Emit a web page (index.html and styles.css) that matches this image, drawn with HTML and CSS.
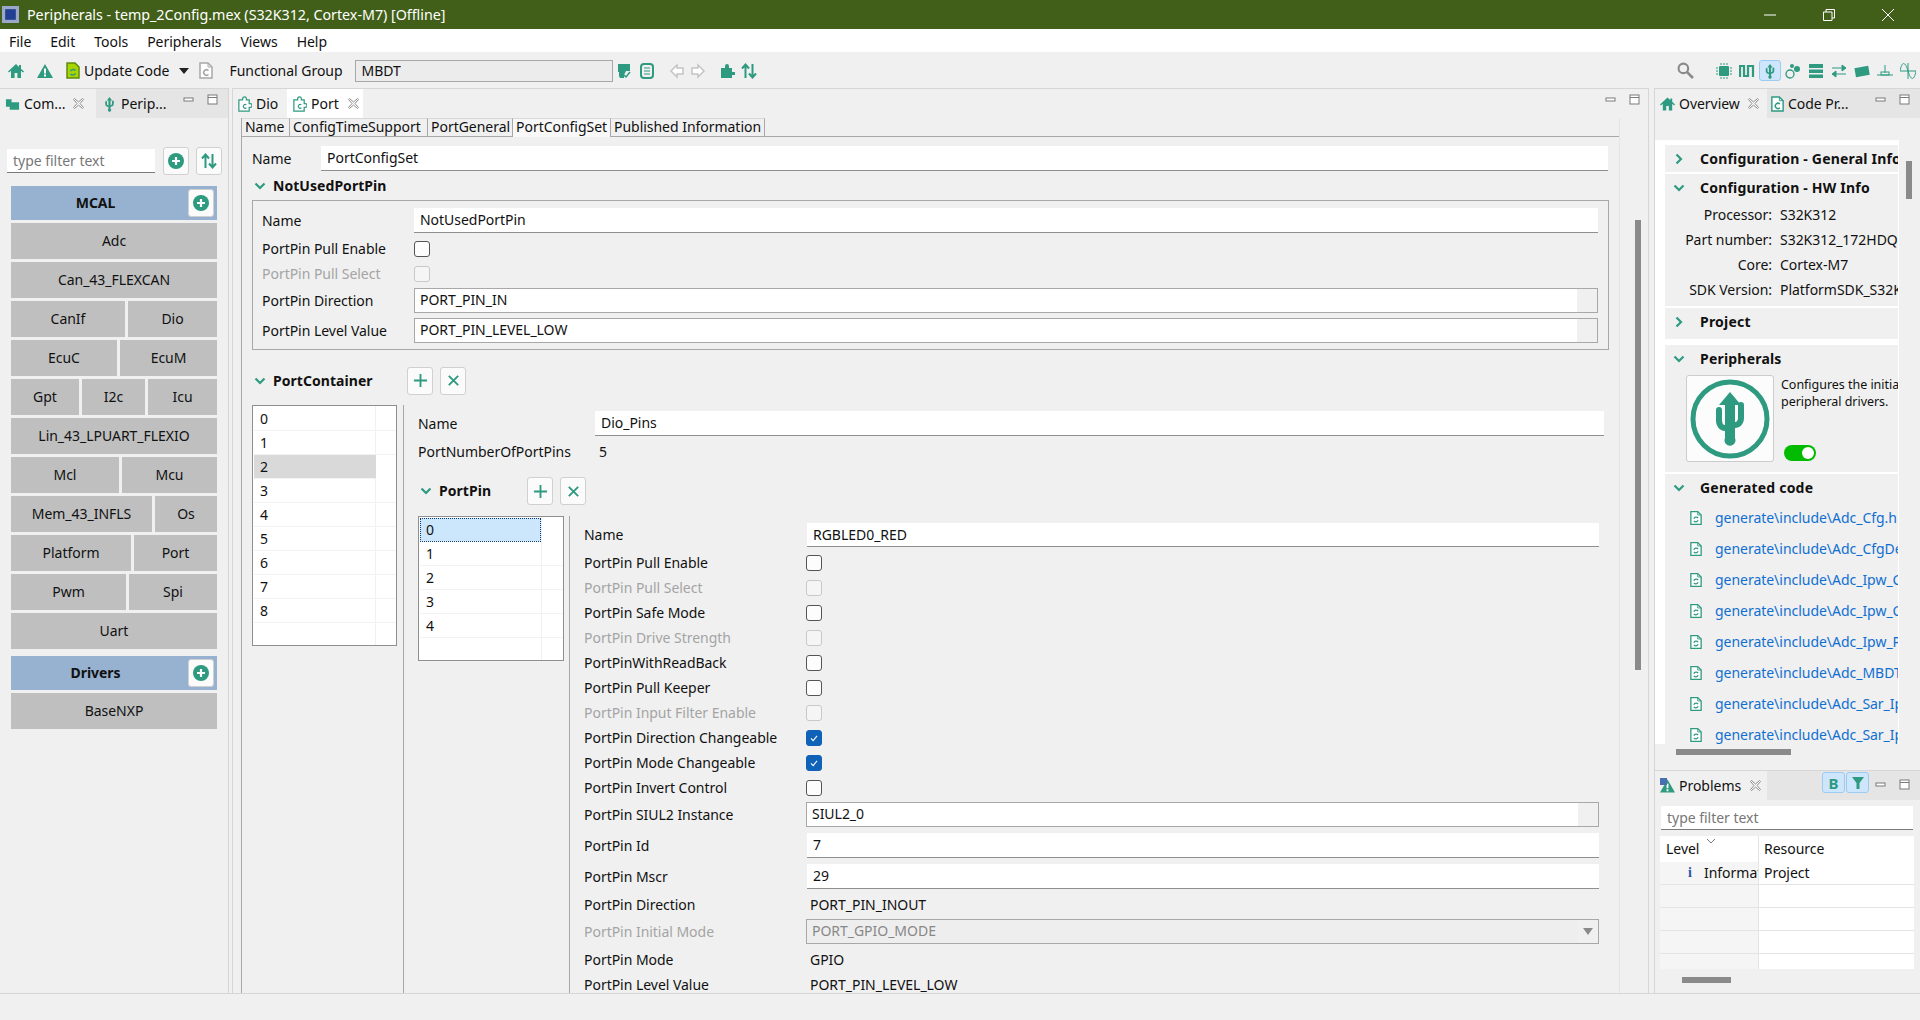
FILE: index.html
```html
<!DOCTYPE html>
<html lang="en">
<head>
<meta charset="utf-8">
<title>Peripherals - temp_2Config.mex</title>
<link rel="stylesheet" href="styles.css">
</head>
<body>
<svg class="defs" width="0" height="0">
  <symbol id="home" viewBox="0 0 16 16"><path d="M8 1 0 8.5l1 1L3 7.7V15h3.6v-5h2.800v5H13V7.7l2 1.800 1-1-3-2.800V2h-2v2z" fill="currentColor"/></symbol>
  <symbol id="warn" viewBox="0 0 16 16"><path d="M8 1 16 15H0z" fill="currentColor"/><path d="M7 5.500h2V10.500H7zM7 11.500h2v2H7z" fill="#fff"/></symbol>
  <symbol id="doc" viewBox="0 0 14 17"><path d="M1 1h8l4 4v11H1z" fill="#fff" stroke="currentColor" stroke-width="1.500"/><path d="M9 1v4h4" fill="none" stroke="currentColor"/><path d="M9.500 8.500a3 3 0 0 0-5 .8M4.500 12a3 3 0 0 0 5-.8" fill="none" stroke="currentColor" stroke-width="1.500"/></symbol>
  <symbol id="docc" viewBox="0 0 14 17"><path d="M1 1h8l4 4v11H1z" fill="#fff" stroke="currentColor" stroke-width="1.500"/><path d="M9 1v4h4" fill="none" stroke="currentColor"/><path d="M9.500 8.500a2.800 2.800 0 1 0 0 4" fill="none" stroke="currentColor" stroke-width="1.600"/></symbol>
  <symbol id="puz" viewBox="0 0 16 17"><path d="M2 4h4V3a2 2 0 0 1 4 0v1h3v4h1a2 2 0 0 1 0 4h-1v4H2z" fill="#fff" stroke="currentColor" stroke-width="1.300"/><path d="M10 9.500a2 2 0 1 0 0 3" fill="none" stroke="currentColor" stroke-width="1.200"/></symbol>
  <symbol id="plus" viewBox="0 0 16 16"><path d="M8 1v14M1 8h14" stroke="currentColor" stroke-width="2" fill="none"/></symbol>
  <symbol id="times" viewBox="0 0 16 16"><path d="M3 3l10 10M13 3 3 13" stroke="currentColor" stroke-width="2" fill="none"/></symbol>
  <symbol id="cplus" viewBox="0 0 16 16"><circle cx="8" cy="8" r="8" fill="currentColor"/><path d="M8 4v8M4 8h8" stroke="#fff" stroke-width="2.200"/></symbol>
  <symbol id="updown" viewBox="0 0 16 16"><path d="M4.500 15V2M1 5.500 4.500 1.500 8 5.500M11.500 1v13M8 10.500l3.500 4 3.500-4" fill="none" stroke="currentColor" stroke-width="2"/></symbol>
  <symbol id="chr" viewBox="0 0 12 12"><path d="M3.500 1.500 8 6l-4.500 4.500" fill="none" stroke="currentColor" stroke-width="2.200"/></symbol>
  <symbol id="chd" viewBox="0 0 12 12"><path d="M1.500 3.500 6 8l4.500-4.500" fill="none" stroke="currentColor" stroke-width="2.200"/></symbol>
  <symbol id="close" viewBox="0 0 11 11"><path d="M1.500.5 5.500 4l4-3.500 1 1L7 5.500l3.500 4-1 1-4-3.500-4 3.500-1-1L4 5.500.5 1.500z" fill="#fff" stroke="#8a8a8a"/></symbol>
  <symbol id="min" viewBox="0 0 12 12"><rect x="1" y="4" width="9" height="3" fill="#fff" stroke="#7a7a7a"/></symbol>
  <symbol id="max" viewBox="0 0 12 12"><rect x="1" y="1" width="9" height="9" fill="#fff" stroke="#7a7a7a"/><path d="M1 3.500h9" stroke="#7a7a7a"/></symbol>
  <symbol id="cactus" viewBox="0 0 16 18"><path d="M8 1 11 5H9.200v9.500a1.800 1.800 0 1 1-2.400 0V12.500C5 12.500 3.200 11 3.200 9V6.500a1 1 0 0 1 2 0V9c0 1 .8 1.600 1.600 1.600V5H5zM9.200 10.300c1 0 1.600-.8 1.600-1.600V6a1 1 0 0 1 2 0v2.700c0 2-1.600 3.400-3.600 3.400z" fill="currentColor"/></symbol>
  <symbol id="chip" viewBox="0 0 16 16"><rect x="3" y="3" width="10" height="10" rx="1" fill="currentColor"/><path d="M5 0v2M8 0v2M11 0v2M0 5h2M0 8h2M0 11h2M5 14v2M8 14v2M11 14v2M14 5h2M14 8h2M14 11h2" stroke="currentColor" fill="none"/></symbol>
</svg>

<header class="titlebar">
  <svg class="appicon" viewBox="0 0 16 16"><rect width="16" height="16" fill="#9aa7c9"/><rect x="3" y="3" width="10" height="10" fill="#223f91"/></svg>
  <span class="titletext">Peripherals - temp_2Config.mex (S32K312, Cortex-M7) [Offline]</span>
  <div class="winbtns">
    <svg class="winbtn" viewBox="0 0 14 14"><path d="M1 7h12" stroke="#fff" fill="none"/></svg>
    <svg class="winbtn" viewBox="0 0 14 14"><path d="M1.500 4h8.500v8.500H1.500zM4 4V1.500h8.500V10H10" stroke="#fff" fill="none"/></svg>
    <svg class="winbtn" viewBox="0 0 14 14"><path d="M1 1l12 12M13 1 1 13" stroke="#fff" fill="none"/></svg>
  </div>
</header>

<nav class="menubar">
  <span>File</span><span>Edit</span><span>Tools</span><span>Peripherals</span><span>Views</span><span>Help</span>
</nav>

<div class="toolbar">
  <svg class="ti teal i-home"><use href="#home"/></svg>
  <svg class="ti teal i-warn"><use href="#warn"/></svg>
  <svg class="ti i-update" viewBox="0 0 14 17"><path d="M1 1h8l4 4v11H1z" fill="#a8d400" stroke="#5f8a10" stroke-width="1.500"/><path d="M9.500 8.500a3 3 0 0 0-5 .8M4.500 12a3 3 0 0 0 5-.8" fill="none" stroke="#2e9a80" stroke-width="1.500"/></svg>
  <span class="t-update">Update Code</span>
  <span class="t-drop"></span>
  <svg class="ti grey i-c"><use href="#docc"/></svg>
  <span class="t-fg">Functional Group</span>
  <div class="t-combo">MBDT</div>
  <svg class="ti teal i-flag" viewBox="0 0 14 16"><path d="M1 1h12v7H9l-2 4v3H3l-1-2V9H1z" fill="currentColor"/><path d="M7 12l2 2 4-5" fill="none" stroke="currentColor" stroke-width="1.500"/></svg>
  <svg class="ti teal i-list" viewBox="0 0 14 16"><rect x="1" y="1" width="12" height="14" rx="3" fill="none" stroke="currentColor" stroke-width="2"/><path d="M4 5h6M4 8h6M4 11h6" stroke="currentColor"/></svg>
  <svg class="ti i-back" viewBox="0 0 16 16"><path d="M8 2 2 8l6 6v-3h6V5H8z" fill="#fff" stroke="#c4c4c4" stroke-width="1.500"/></svg>
  <svg class="ti i-fwd" viewBox="0 0 16 16"><path d="M8 2l6 6-6 6v-3H2V5h6z" fill="#fff" stroke="#c4c4c4" stroke-width="1.500"/></svg>
  <svg class="ti teal i-puz" viewBox="0 0 16 16"><path d="M1 5h4V3a2 2 0 0 1 4 0v2h3v4h3v3h-3v3H1z" fill="currentColor"/></svg>
  <svg class="ti teal i-ud"><use href="#updown"/></svg>
  <div class="t-right">
    <svg class="ti grey i-search" viewBox="0 0 16 16"><circle cx="6" cy="6" r="4.500" fill="none" stroke="currentColor" stroke-width="2"/><path d="M9.500 9.500 15 15" stroke="currentColor" stroke-width="2.500"/></svg>
    <svg class="ti teal r1"><use href="#chip"/></svg>
    <svg class="ti teal r1" viewBox="0 0 16 16"><path d="M1 14V3h4v10h4V3h5v11" fill="none" stroke="currentColor" stroke-width="2.200"/></svg>
    <span class="active-ic"><svg class="ti teal"><use href="#cactus"/></svg></span>
    <svg class="ti teal r1" viewBox="0 0 16 16"><circle cx="5" cy="11" r="4" fill="none" stroke="currentColor" stroke-width="1.300"/><circle cx="12" cy="6" r="3" fill="currentColor"/><circle cx="7" cy="3" r="2" fill="currentColor"/></svg>
    <svg class="ti teal r1" viewBox="0 0 16 16"><path d="M1 1h14v4H1zM1 6.500h14v3.500H1zM1 11.500h14V15H1z" fill="currentColor"/></svg>
    <svg class="ti teal r1" viewBox="0 0 16 16"><path d="M1 5h10M11 2l4 3-4 3zM15 11H5M5 8l-4 3 4 3z" fill="currentColor" stroke="currentColor"/></svg>
    <svg class="ti teal r1" viewBox="0 0 16 16"><rect x="1" y="4" width="14" height="9" transform="rotate(-10 8 8)" fill="currentColor"/></svg>
    <svg class="ti teal r1" viewBox="0 0 16 16"><path d="M0 12h16M8 2v8" stroke="currentColor" fill="none"/><rect x="4" y="9" width="8" height="3" fill="none" stroke="currentColor"/></svg>
    <svg class="ti teal r1" viewBox="0 0 16 16"><path d="M0 8h16M8 0v16M0 8c2-10 5-10 8 0s6 10 8 0" stroke="currentColor" fill="none"/></svg>
  </div>
</div>

<main class="workspace">

  <aside class="panel left">
    <div class="panelhead">
      <div class="ptab current"><svg class="pi teal" viewBox="0 0 16 16"><path d="M1 3h6v3h8v8H5v-3H1z" fill="currentColor"/></svg><span>Com...</span><svg class="x"><use href="#close"/></svg></div>
      <div class="ptab other"><svg class="pi teal"><use href="#cactus"/></svg><span>Perip...</span></div>
      <div class="pctl"><svg class="c"><use href="#min"/></svg><svg class="c"><use href="#max"/></svg></div>
    </div>
    <div class="filterbar">
      <div class="filter">type filter text</div>
      <button class="sqbtn"><svg class="bi teal"><use href="#cplus"/></svg></button>
      <button class="sqbtn"><svg class="bi teal"><use href="#updown"/></svg></button>
    </div>
    <div class="palette">
      <div class="pgroup">MCAL<button class="sqbtn gadd"><svg class="bi teal"><use href="#cplus"/></svg></button></div>
      <div class="prow"><div class="pcell">Adc</div></div>
      <div class="prow"><div class="pcell">Can_43_FLEXCAN</div></div>
      <div class="prow"><div class="pcell w114">CanIf</div><div class="pcell">Dio</div></div>
      <div class="prow"><div class="pcell w106">EcuC</div><div class="pcell">EcuM</div></div>
      <div class="prow"><div class="pcell w68">Gpt</div><div class="pcell w63">I2c</div><div class="pcell">Icu</div></div>
      <div class="prow"><div class="pcell">Lin_43_LPUART_FLEXIO</div></div>
      <div class="prow"><div class="pcell w108">Mcl</div><div class="pcell">Mcu</div></div>
      <div class="prow"><div class="pcell w141">Mem_43_INFLS</div><div class="pcell">Os</div></div>
      <div class="prow"><div class="pcell w120">Platform</div><div class="pcell">Port</div></div>
      <div class="prow"><div class="pcell w115">Pwm</div><div class="pcell">Spi</div></div>
      <div class="prow"><div class="pcell">Uart</div></div>
      <div class="pgroup drivers">Drivers<button class="sqbtn gadd"><svg class="bi teal"><use href="#cplus"/></svg></button></div>
      <div class="prow"><div class="pcell">BaseNXP</div></div>
    </div>
  </aside>

  <section class="panel center">
    <div class="panelhead">
      <div class="ptab dio"><svg class="pi teal"><use href="#puz"/></svg><span>Dio</span></div>
      <div class="ptab port"><svg class="pi teal"><use href="#puz"/></svg><span>Port</span><svg class="x"><use href="#close"/></svg></div>
      <div class="pctl"><svg class="c"><use href="#min"/></svg><svg class="c"><use href="#max"/></svg></div>
    </div>
    <div class="centerbody">
      <div class="editor">
        <div class="subtabs">
          <span class="st w46">Name</span><span class="st w138">ConfigTimeSupport</span><span class="st w85">PortGeneral</span><span class="st w98 on">PortConfigSet</span><span class="st w154">Published Information</span>
        </div>
        <div class="form">
          <div class="frow toprow"><label class="lab l69">Name</label><div class="inp w1286">PortConfigSet</div></div>
          <div class="sechead h30"><svg class="chev teal"><use href="#chd"/></svg><b>NotUsedPortPin</b></div>
          <div class="groupbox">
            <div class="frow"><label class="lab l152">Name</label><div class="inp grow">NotUsedPortPin</div></div>
            <div class="frow mt3"><label class="lab l152">PortPin Pull Enable</label><span class="cb"></span></div>
            <div class="frow"><label class="lab l152 dis">PortPin Pull Select</label><span class="cb dcb"></span></div>
            <div class="frow mt2"><label class="lab l152">PortPin Direction</label><div class="combo grow">PORT_PIN_IN<span class="arrow"></span></div></div>
            <div class="frow mt5"><label class="lab l152">PortPin Level Value</label><div class="combo grow">PORT_PIN_LEVEL_LOW<span class="arrow"></span></div></div>
          </div>

          <div class="sechead cont"><svg class="chev teal"><use href="#chd"/></svg><b class="b-cont">PortContainer</b><button class="sqbtn"><svg class="si teal"><use href="#plus"/></svg></button><button class="sqbtn"><svg class="si teal"><use href="#times"/></svg></button></div>
          <div class="master">
            <div class="list list1">
              <div class="li">0</div><div class="li">1</div><div class="li sel">2</div><div class="li">3</div><div class="li">4</div><div class="li">5</div><div class="li">6</div><div class="li">7</div><div class="li">8</div>
            </div>
            <div class="detail d1">
              <div class="frow"><label class="lab l177">Name</label><div class="inp grow">Dio_Pins</div></div>
              <div class="frow mt3"><label class="lab l181">PortNumberOfPortPins</label><span class="val">5</span></div>
              <div class="sechead pin"><svg class="chev teal"><use href="#chd"/></svg><b class="b-pin">PortPin</b><button class="sqbtn"><svg class="si teal"><use href="#plus"/></svg></button><button class="sqbtn"><svg class="si teal"><use href="#times"/></svg></button></div>
              <div class="master m2">
                <div class="list list2">
                  <div class="li focus">0</div><div class="li">1</div><div class="li">2</div><div class="li">3</div><div class="li">4</div><div class="li"></div>
                </div>
                <div class="detail d2">
                  <div class="frow"><label class="lab l223">Name</label><div class="inp grow">RGBLED0_RED</div></div>
                  <div class="cbs">
                    <div class="frow"><label class="lab l222">PortPin Pull Enable</label><span class="cb"></span></div>
                    <div class="frow"><label class="lab l222 dis">PortPin Pull Select</label><span class="cb dcb"></span></div>
                    <div class="frow"><label class="lab l222">PortPin Safe Mode</label><span class="cb"></span></div>
                    <div class="frow"><label class="lab l222 dis">PortPin Drive Strength</label><span class="cb dcb"></span></div>
                    <div class="frow"><label class="lab l222">PortPinWithReadBack</label><span class="cb"></span></div>
                    <div class="frow"><label class="lab l222">PortPin Pull Keeper</label><span class="cb"></span></div>
                    <div class="frow"><label class="lab l222 dis">PortPin Input Filter Enable</label><span class="cb dcb"></span></div>
                    <div class="frow"><label class="lab l222">PortPin Direction Changeable</label><span class="cb on"><svg viewBox="0 0 16 16"><path d="M4.500 8.500 7 11l4.500-5.500" fill="none" stroke="#fff" stroke-width="1.200"/></svg></span></div>
                    <div class="frow"><label class="lab l222">PortPin Mode Changeable</label><span class="cb on"><svg viewBox="0 0 16 16"><path d="M4.500 8.500 7 11l4.500-5.500" fill="none" stroke="#fff" stroke-width="1.200"/></svg></span></div>
                    <div class="frow"><label class="lab l222">PortPin Invert Control</label><span class="cb"></span></div>
                  </div>
                  <div class="frow mt2"><label class="lab l222">PortPin SIUL2 Instance</label><div class="combo grow">SIUL2_0<span class="arrow"></span></div></div>
                  <div class="frow mt6"><label class="lab l223">PortPin Id</label><div class="inp grow">7</div></div>
                  <div class="frow mt6"><label class="lab l223">PortPin Mscr</label><div class="inp grow">29</div></div>
                  <div class="frow mt3"><label class="lab l222">PortPin Direction</label><span class="val v4">PORT_PIN_INOUT</span></div>
                  <div class="frow mt2"><label class="lab l222 dis">PortPin Initial Mode</label><div class="combo grow off">PORT_GPIO_MODE<span class="arrow"><i class="tri"></i></span></div></div>
                  <div class="frow mt3"><label class="lab l222">PortPin Mode</label><span class="val v4">GPIO</span></div>
                  <div class="frow"><label class="lab l222">PortPin Level Value</label><span class="val v4">PORT_PIN_LEVEL_LOW</span></div>
                </div>
              </div>
            </div>
          </div>
        </div>
      </div>
      <div class="vscroll"><i class="thumb"></i></div>
    </div>
  </section>

  <div class="rightcol">
    <section class="panel overview">
      <div class="panelhead">
        <div class="ptab ov"><svg class="pi teal"><use href="#home"/></svg><span>Overview</span><svg class="x"><use href="#close"/></svg></div>
        <div class="ptab other cp"><svg class="pi teal"><use href="#docc"/></svg><span>Code Pr...</span></div>
        <div class="pctl"><svg class="c"><use href="#min"/></svg><svg class="c"><use href="#max"/></svg></div>
      </div>
      <div class="ovarea">
        <div class="ovsheet">
          <div class="ovscroll">
            <div class="ovsec s27"><div class="ovh"><svg class="chev teal"><use href="#chr"/></svg><b>Configuration - General Info</b></div></div>
            <div class="ovsec s130"><div class="ovh"><svg class="chev teal"><use href="#chd"/></svg><b>Configuration - HW Info</b></div>
              <div class="kv"><span class="k">Processor:</span><span class="v">S32K312</span></div>
              <div class="kv"><span class="k">Part number:</span><span class="v">S32K312_172HDQFP</span></div>
              <div class="kv"><span class="k">Core:</span><span class="v">Cortex-M7</span></div>
              <div class="kv"><span class="k">SDK Version:</span><span class="v">PlatformSDK_S32K3</span></div>
            </div>
            <div class="ovsec s31"><div class="ovh"><svg class="chev teal"><use href="#chr"/></svg><b>Project</b></div></div>
            <div class="ovsec s127"><div class="ovh"><svg class="chev teal"><use href="#chd"/></svg><b>Peripherals</b></div>
              <div class="perip">
                <div class="bigicon"><svg class="big" viewBox="0 0 80 80"><circle cx="40" cy="40" r="37" fill="none" stroke="currentColor" stroke-width="5"/><path d="M40 13 51 26H45V59a5.500 5.500 0 1 1-10 0V52C30 52 26 47 26 42V31a3 3 0 0 1 6 0V41c0 3 1 5 3 5V26H29zM45 43c2 0 3-2 3-4V26a3 3 0 0 1 6 0V39c0 6-4 10-9 10z" fill="currentColor"/></svg></div>
                <div class="pdesc"><p>Configures the initialization of<br>peripheral drivers.</p><span class="toggle"><i></i></span></div>
              </div>
            </div>
            <div class="ovsec gen"><div class="ovh"><svg class="chev teal"><use href="#chd"/></svg><b>Generated code</b></div>
              <div class="link"><svg class="li-i teal"><use href="#doc"/></svg><a>generate\include\Adc_Cfg.h</a></div>
              <div class="link"><svg class="li-i teal"><use href="#doc"/></svg><a>generate\include\Adc_CfgDefines.h</a></div>
              <div class="link"><svg class="li-i teal"><use href="#doc"/></svg><a>generate\include\Adc_Ipw_Cfg.h</a></div>
              <div class="link"><svg class="li-i teal"><use href="#doc"/></svg><a>generate\include\Adc_Ipw_CfgDefines.h</a></div>
              <div class="link"><svg class="li-i teal"><use href="#doc"/></svg><a>generate\include\Adc_Ipw_PBcfg.h</a></div>
              <div class="link"><svg class="li-i teal"><use href="#doc"/></svg><a>generate\include\Adc_MBDT_PBcfg.h</a></div>
              <div class="link"><svg class="li-i teal"><use href="#doc"/></svg><a>generate\include\Adc_Sar_Ip_Cfg.h</a></div>
              <div class="link"><svg class="li-i teal"><use href="#doc"/></svg><a>generate\include\Adc_Sar_Ip_Types.h</a></div>
            </div>
          </div>
          <div class="ovvs"><i></i></div>
        </div>
        <div class="hscroll h1"><i></i></div>
      </div>
    </section>
    <section class="panel problems">
      <div class="panelhead">
        <div class="ptab prob"><span class="pwarn"><svg class="pi teal"><use href="#warn"/></svg><i class="badge"></i></span><span>Problems</span><svg class="x"><use href="#close"/></svg></div>
        <div class="pctl"><span class="tog">B</span><span class="tog"><svg class="fun" viewBox="0 0 14 14"><path d="M1 1h12L8.500 7v6h-3V7z" fill="currentColor"/></svg></span><svg class="c"><use href="#min"/></svg><svg class="c"><use href="#max"/></svg></div>
      </div>
      <div class="pbody">
        <div class="filter pf">type filter text</div>
        <div class="ptable">
          <div class="trow thead"><div class="tc c1">Level<svg class="sort" viewBox="0 0 10 6"><path d="M1 1l4 4 4-4" fill="none" stroke="#777"/></svg></div><div class="tc c2">Resource</div></div>
          <div class="trow"><div class="tc c1 g"><span class="info">i</span>Informat</div><div class="tc c2">Project</div></div>
          <div class="trow"><div class="tc c1 g"></div><div class="tc c2"></div></div>
          <div class="trow"><div class="tc c1 g"></div><div class="tc c2"></div></div>
          <div class="trow"><div class="tc c1 g"></div><div class="tc c2"></div></div>
          <div class="trow last"><div class="tc c1 g"></div><div class="tc c2"></div></div>
        </div>
        <div class="hscroll h2"><i></i></div>
      </div>
    </section>
  </div>
</main>
<footer class="status"></footer>
</body>
</html>
```

FILE: styles.css
```css
* { box-sizing: border-box; }
html, body { margin: 0; padding: 0; height: 100%; }
body {
  width: 1920px; height: 1020px; overflow: hidden;
  display: flex; flex-direction: column;
  background: #f0f0f0; color: #111;
  font: 14px/18px "Noto Sans", "Open Sans", sans-serif;
  letter-spacing: -0.03px;
}
b { letter-spacing: 0.05px; }
.defs { position: absolute; }
svg { display: block; flex: none; }
.teal { color: #2e9a80; }
.grey { color: #8a8a8a; }
p { margin: 0; }
button { padding: 0; font: inherit; }

.titlebar { height: 29px; background: #415f18; color: #fff; display: flex; align-items: center; flex: none; padding-left: 2px; }
.appicon { width: 17px; height: 17px; margin-right: 8px; }
.titletext { font-size: 14.300px; }
.winbtns { margin-left: auto; display: flex; gap: 45px; padding-right: 25px; }
.winbtn { width: 14px; height: 14px; }

.menubar { height: 23px; background: #fff; display: flex; flex: none; align-items: center; padding: 2px 0 0 9px; gap: 19px; }

.toolbar { height: 36px; display: flex; flex: none; align-items: center; padding-top: 1px; }
.ti { width: 16px; height: 16px; }
.i-home { margin-left: 8px; }
.i-warn { margin-left: 13px; }
.i-update { margin-left: 13px; width: 14px; height: 17px; }
.t-update { margin-left: 4px; }
.t-drop { margin-left: 10px; border: 5px solid transparent; border-top: 6px solid #222; border-bottom: 0; }
.i-c { margin-left: 10px; width: 14px; height: 17px; color: #a8a8a8; }
.t-fg { margin-left: 16px; }
.t-combo { margin-left: 12px; width: 258px; height: 22px; border: 1px solid #a8a8a8; background: #ececec; padding-left: 6px; line-height: 19px; }
.i-flag { margin-left: 4px; width: 14px; }
.i-list { margin-left: 9px; width: 14px; }
.i-back { margin-left: 15px; }
.i-fwd { margin-left: 5px; }
.i-puz { margin-left: 14px; }
.i-ud { margin-left: 5px; }
.t-right { margin-left: auto; display: flex; align-items: center; padding-right: 4px; gap: 7px; }
.i-search { margin-right: 15px; width: 17px; height: 17px; }
.active-ic { width: 22px; height: 21px; border-radius: 3px; background: #cde6fb; border: 1px solid #9ccbf2; display: flex; align-items: center; justify-content: center; margin: 0 -3px; }

.workspace { flex: 1; display: flex; min-height: 0; }
.panel { background: #f0f0f0; border: 1px solid #d6d6d6; border-width: 1px 1px 0; display: flex; flex-direction: column; min-height: 0; }
.left { width: 229px; margin-right: 3px; flex: none; border-left: 0; }
.center { width: 1417px; margin-right: 5px; flex: none; }
.rightcol { flex: 1; display: flex; flex-direction: column; min-width: 0; }
.panelhead { height: 29px; flex: none; display: flex; align-items: center; background: #e5e5e5; position: relative; }
.center .panelhead { background: #f0f0f0; }
.ptab { height: 29px; display: flex; align-items: center; flex: none; }
.ptab.current { width: 96px; background: #f0f0f0; padding-left: 5px; }
.ptab.current .x { margin-left: 8px; }
.ptab.other { padding-left: 6px; }
.pi { width: 15px; height: 16px; margin-right: 4px; }
.x { width: 11px; height: 11px; margin-left: 9px; }
.pctl { margin-left: auto; display: flex; align-items: center; gap: 12px; padding-right: 9px; align-self: flex-start; padding-top: 5px; }
.center .pctl { padding-right: 7px; }
.c { width: 12px; height: 12px; }
.ptab.dio { width: 54px; padding-left: 4px; }
.ptab.port { width: 76px; background: #fff; padding-left: 5px; }

.filterbar { display: flex; padding: 29px 0 0 7px; align-items: flex-start; height: 68px; }
.filter { width: 148px; height: 24px; background: #fff; border-bottom: 1px solid #7a7a7a; color: #777; padding-left: 6px; line-height: 23px; margin-top: 2px; }
.sqbtn { width: 26px; height: 28px; border: 1px solid #d0d0d0; border-radius: 3px; background: #fbfbfb; display: flex; align-items: center; justify-content: center; flex: none; }
.filterbar .sqbtn { margin-left: 7px; }
.filterbar .sqbtn:first-of-type { margin-left: 8px; }
.bi { width: 16px; height: 16px; }
.si { width: 15px; height: 15px; }

.palette { padding: 0 11px; display: flex; flex-direction: column; gap: 3px; }
.pgroup { height: 34px; background: #96b2d0; position: relative; display: flex; align-items: center; justify-content: center; padding-right: 37px; font-weight: 700; }
.pgroup.drivers { margin-top: 4px; }
.gadd { position: absolute; right: 3px; top: 3px; }
.prow { display: flex; gap: 3px; height: 36px; }
.pcell { flex: 1; min-width: 0; background: #bfbfbf; display: flex; align-items: center; justify-content: center; }
.w114 { flex: 0 0 114px; } .w106 { flex: 0 0 106px; } .w68 { flex: 0 0 68px; } .w63 { flex: 0 0 63px; }
.w108 { flex: 0 0 108px; } .w141 { flex: 0 0 141px; } .w120 { flex: 0 0 120px; } .w115 { flex: 0 0 115px; }

.centerbody { flex: 1; min-height: 0; display: flex; padding-left: 8px; overflow: hidden; }
.editor { width: 1378px; flex: none; border-left: 1px solid #a8a8a8; overflow: hidden; }
.subtabs { height: 19px; display: flex; border-bottom: 1px solid #a8a8a8; padding-left: 0; line-height: 15px; }
.st { border-right: 1px solid #a8a8a8; padding-left: 3px; background: #f0f0f0; flex: none; white-space: nowrap; border-top: 1px solid #d8d8d8; }
.st.on { background: #f8f8f8; height: 19px; }
.st.w46 { width: 48px; } .st.w138 { width: 138px; } .st.w85 { width: 85px; } .st.w98 { width: 98px; } .st.w154 { width: 154px; }
.form { padding: 9px 0 0 10px; }
.frow { display: flex; align-items: center; min-height: 25px; flex: none; }
.lab { flex: none; white-space: nowrap; }
.l69 { width: 69px; } .l152 { width: 152px; } .l177 { width: 177px; } .l181 { width: 181px; } .l222 { width: 222px; } .l223 { width: 223px; }
.dis { color: #a4a4a4; }
.val { padding-left: 0; }
.val.v4 { padding-left: 4px; }
.inp { height: 25px; background: #fff; border-bottom: 1px solid #8f8f8f; padding-left: 6px; line-height: 23px; }
.w1286 { width: 1287px; }
.grow { flex: 1; min-width: 0; }
.combo { height: 25px; background: #fff; border: 1px solid #a8a8a8; padding-left: 5px; line-height: 22px; position: relative; }
.combo.off { background: #eee; color: #888; }
.arrow { position: absolute; right: 0; top: 0; bottom: 0; width: 20px; background: #f0f0f0; display: flex; align-items: center; justify-content: center; }
.tri { border: 5px solid transparent; border-top: 7px solid #8a8a8a; border-bottom: 0; }
.cb { width: 16px; height: 16px; border: 1px solid #555; border-radius: 3px; background: #fdfdfd; flex: none; display: block; }
.cb.dcb { border-color: #c8c8c8; background: #f5f5f5; }
.cb.on { background: #0f62b7; border-color: #0f62b7; }
.sechead { display: flex; align-items: center; }
.sechead b { font-weight: 700; }
.chev { width: 12px; height: 12px; margin: 0 7px 0 2px; }
.h30 { height: 29px; }
.groupbox { width: 1357px; height: 150px; border: 1px solid #a8a8a8; padding: 7px 10px 0 9px; }
.mt2 { margin-top: 2px; } .mt3 { margin-top: 3px; } .mt4 { margin-top: 4px; } .mt5 { margin-top: 5px; } .mt6 { margin-top: 6px; }
.cont { margin-top: 17px; height: 27px; }
.b-cont { width: 134px; }
.cont .sqbtn, .pin .sqbtn { margin-right: 7px; }
.master { display: flex; align-items: flex-start; margin-top: 11px; }
.list { background: #fff; border: 1px solid #8f8f8f; flex: none; padding: 1px 0 0 1px; }
.list1 { width: 145px; height: 241px; background: linear-gradient(90deg, #fff 122px, #eef2f8 122px, #eef2f8 123px, #fff 123px); }
.list2 { width: 146px; height: 145px; padding-left: 1px; background: linear-gradient(90deg, #fff 122px, #eef2f8 122px, #eef2f8 123px, #fff 123px); }
.li { height: 24px; border-bottom: 1px solid #f2f2f2; padding-left: 6px; line-height: 24px; }
.list1 .li.sel { background: #d9d9d9; width: 122px; }
.li.focus { background: #cce6fb; width: 121px; outline: 1px dotted #0a3d78; outline-offset: -1px; }
.detail { flex: 1; min-width: 0; border-left: 1px solid #a8a8a8; }
.d1 { margin-left: 6px; height: 600px; padding: 6px 15px 0 14px; }
.pin { margin-top: 14px; height: 26px; }
.b-pin { width: 88px; }
.m2 { margin-top: 12px; }
.d2 { margin-left: 5px; height: 490px; padding: 6px 5px 0 14px; }
.d2 > .frow:first-child .inp { height: 24px; }
.cbs { margin-top: 3px; }
.vscroll { flex: 1; position: relative; border-left: 1px solid #e4e4e4; }
.thumb { position: absolute; left: 15px; top: 102px; width: 6px; height: 450px; background: #8a8a8a; }

.overview { height: 682px; flex: none; border-right: 0; }
.ptab.ov { width: 112px; background: #f0f0f0; padding-left: 5px; }
.ptab.ov .x { margin-left: 8px; }
.ptab.other.cp { padding-left: 3px; }
.ptab.cp .pi { margin-right: 3px; }
.ovarea { flex: 1; padding-top: 22px; display: flex; flex-direction: column; min-height: 0; }
.ovsheet { height: 604px; display: flex; }
.ovscroll { width: 244px; background: #fff; padding: 5px 1px 0 10px; overflow: hidden; flex: none; }
.ovsec { background: #f0f0f0; margin-bottom: 2px; overflow: hidden; }
.s27 { height: 27px; } .s130 { height: 132px; } .s31 { height: 31px; margin-bottom: 6px; } .s127 { height: 127px; }
.gen { height: 300px; background: #f0f0f0; }
.ovh { height: 27px; display: flex; align-items: center; padding-left: 8px; white-space: nowrap; }
.ovh .chev { margin: 0 15px 0 0; }
.ovh b { letter-spacing: 0.2px; }
.kv { height: 25px; display: flex; align-items: center; margin-top: 0; white-space: nowrap; }
.s130 .ovh { height: 28px; }
.k { width: 107px; text-align: right; flex: none; }
.v { margin-left: 8px; }
.perip { display: flex; padding: 3px 0 0 21px; }
.bigicon { width: 88px; height: 87px; background: #fcfcfc; border: 1px solid #ccc; border-radius: 3px; flex: none; display: flex; align-items: center; justify-content: center; }
.big { width: 80px; height: 80px; color: #2e9a80; }
.pdesc { margin-left: 7px; font-size: 12.500px; line-height: 17px; white-space: nowrap; padding-top: 1px; }
.toggle { display: block; width: 32px; height: 16px; border-radius: 8px; background: #00bb00; margin: 35px 0 0 3px; position: relative; }
.toggle i { position: absolute; right: 2px; top: 2px; width: 12px; height: 12px; border-radius: 50%; background: #fff; }
.link { height: 31px; display: flex; align-items: center; padding-left: 25px; white-space: nowrap; }
.li-i { width: 12px; height: 16px; margin-right: 13px; }
.link a { color: #0f6fd0; }
.gen .ovh { height: 28px; }
.ovvs { flex: 1; position: relative; }
.ovvs i { position: absolute; left: 7px; top: 21px; width: 6px; height: 38px; background: #8a8a8a; }
.hscroll { position: relative; height: 6px; }
.hscroll i { position: absolute; top: 0; height: 6px; background: #8a8a8a; }
.h1 { margin-top: 5px; }
.h1 i { left: 21px; width: 115px; }
.problems { flex: 1; border-right: 0; }
.ptab.prob { width: 112px; background: #f0f0f0; padding-left: 5px; }
.ptab.prob .x { margin-left: 9px; }
.pwarn { position: relative; flex: none; }
.badge { position: absolute; left: 0; top: 0; width: 7px; height: 7px; background: #4a6fb0; }
.problems .pctl { padding-top: 1px; }
.problems .c { margin-top: 4px; }
.tog { width: 23px; height: 21px; margin-right: -11px; background: #cde6fb; border: 1px solid #9ccbf2; border-radius: 3px; color: #2e9a80; font-weight: 700; font-size: 15px; display: flex; align-items: center; justify-content: center; }
.tog:nth-child(2) { margin-right: -6px; }
.fun { width: 14px; height: 14px; }
.pbody { flex: 1; padding: 6px 0 0 6px; }
.filter.pf { width: 252px; margin-top: 0; }
.ptable { width: 254px; margin: 6px 0 0 -1px; background: #fff; height: 133px; overflow: hidden; }
.trow { display: flex; height: 23px; border-bottom: 1px solid #e4e4e4; }
.trow.thead { height: 26px; border-bottom: 0; }
.tc { height: 100%; line-height: 22px; white-space: nowrap; overflow: hidden; position: relative; }
.c1 { width: 99px; border-right: 1px solid #e4e4e4; padding-left: 6px; flex: none; }
.c2 { flex: 1; padding-left: 5px; }
.thead .tc { line-height: 25px; }
.c1.g { background: #f5f5f5; padding-left: 44px; }
.thead .c1 { background: #fff; }
.sort { position: absolute; left: 46px; top: 2px; width: 10px; height: 6px; }
.info { position: absolute; left: 28px; top: 0; color: #2f55a4; font-weight: 700; font-family: "Liberation Serif", serif; }
.h2 { margin-top: 8px; }
.h2 i { left: 21px; width: 49px; }

.status { height: 27px; flex: none; background: #f0f0f0; border-top: 1px solid #d6d6d6; }
```
